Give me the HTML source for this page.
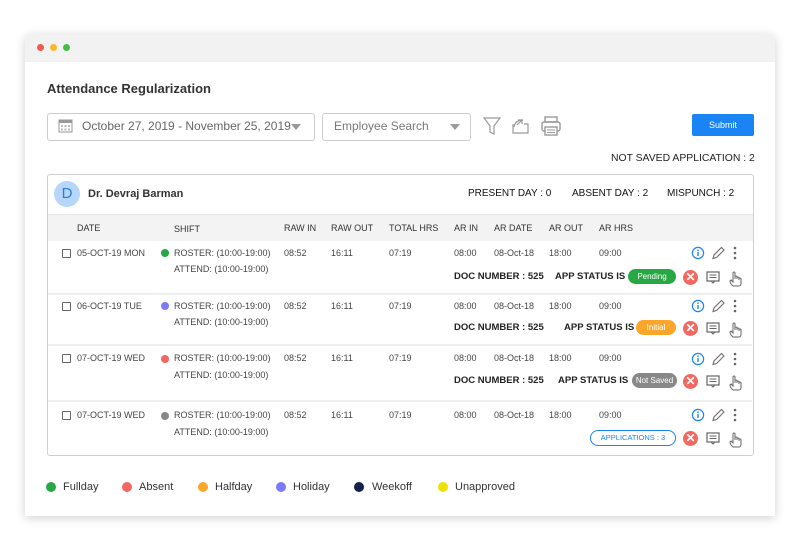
<!DOCTYPE html>
<html><head><meta charset="utf-8"><style>
*{margin:0;padding:0;box-sizing:border-box}
body{width:800px;height:550px;background:#fff;font-family:"Liberation Sans",sans-serif;position:relative;overflow:hidden;color:#333}
.a{position:absolute;white-space:nowrap;line-height:12px}
.win{position:absolute;left:25px;top:34px;width:750px;height:482px;background:#fff;border-radius:6px 6px 0 0;box-shadow:0 2px 10px rgba(0,0,0,.18)}
.bar{position:absolute;left:25px;top:34px;width:750px;height:28px;background:#f2f2f2;border-radius:6px 6px 0 0}
.d{position:absolute;border-radius:50%}
.t{font-size:9px;color:#444}
.h{font-size:9px;color:#333}
.b{font-size:10px;font-weight:bold;color:#222}
.cb{position:absolute;width:9px;height:9px;border:1px solid #666;border-radius:1px}
.pill{position:absolute;height:15px;border-radius:8px;color:#fff;font-size:8px;text-align:center;line-height:15px}
.x{position:absolute;width:15px;height:15px;border-radius:50%;background:#f26860;color:#fff;font-size:12px;line-height:15px;text-align:center;font-weight:bold}
.sep{position:absolute;left:48px;width:704px;height:2px;background:#eceef0}
</style></head><body>
<div class="win"></div><div class="bar"></div>
<div class="d" style="left:37px;top:44px;width:7px;height:7px;background:#f05a50"></div>
<div class="d" style="left:50px;top:44px;width:7px;height:7px;background:#f7b731"></div>
<div class="d" style="left:63px;top:44px;width:7px;height:7px;background:#3ec13e"></div>
<div class="a" style="left:47px;top:82px;font-size:13px;font-weight:bold;color:#333;line-height:14px">Attendance Regularization</div>

<div style="position:absolute;left:47px;top:113px;width:268px;height:28px;border:1px solid #ccc;border-radius:3px"></div>
<svg style="position:absolute;left:58px;top:118px" width="15" height="15" viewBox="0 0 15 15"><rect x="1" y="2" width="13" height="12" fill="none" stroke="#999" stroke-width="1"/><rect x="1" y="2" width="13" height="3" fill="#999"/><g fill="#bbb"><rect x="3" y="7" width="2" height="2"/><rect x="6.5" y="7" width="2" height="2"/><rect x="10" y="7" width="2" height="2"/><rect x="3" y="10.5" width="2" height="2"/><rect x="6.5" y="10.5" width="2" height="2"/><rect x="10" y="10.5" width="2" height="2"/></g></svg>
<div class="a" style="left:82px;top:120px;font-size:12px;color:#666;line-height:13px">October 27, 2019 - November 25, 2019</div>
<div style="position:absolute;left:291px;top:124px;border-left:5px solid transparent;border-right:5px solid transparent;border-top:6px solid #999"></div>
<div style="position:absolute;left:322px;top:113px;width:149px;height:28px;border:1px solid #ccc;border-radius:3px"></div>
<div class="a" style="left:334px;top:120px;font-size:12px;color:#777;line-height:13px">Employee Search</div>
<div style="position:absolute;left:450px;top:124px;border-left:5px solid transparent;border-right:5px solid transparent;border-top:6px solid #999"></div>
<svg style="position:absolute;left:483px;top:116px" width="18" height="20" viewBox="0 0 18 20"><path d="M1 2h16l-6 8v8l-4-2v-6z" fill="none" stroke="#999" stroke-width="1.2"/></svg>
<svg style="position:absolute;left:510px;top:115px" width="20" height="20" viewBox="0 0 20 20"><path d="M3 9v9h15V9h-4M7 10l5-5M12 5H8M12 5v4" fill="none" stroke="#999" stroke-width="1.2"/><path d="M4 12c1-5 4-7 9-7" fill="none" stroke="#999" stroke-width="1.2"/></svg>
<svg style="position:absolute;left:540px;top:115px" width="22" height="22" viewBox="0 0 22 22"><rect x="5" y="2" width="12" height="5" fill="none" stroke="#999" stroke-width="1.4"/><rect x="2" y="7" width="18" height="9" rx="2" fill="none" stroke="#999" stroke-width="1.4"/><rect x="5" y="12" width="12" height="8" fill="#fff" stroke="#999" stroke-width="1.4"/><path d="M7 15h8M7 17.5h8" stroke="#999"/></svg>
<div style="position:absolute;left:692px;top:114px;width:62px;height:22px;background:#1a84f5;border-radius:2px;color:#fff;font-size:9px;text-align:center;line-height:22px">Submit</div>
<div class="a" style="left:611px;top:153px;font-size:10.4px;color:#222">NOT SAVED APPLICATION : 2</div>

<div style="position:absolute;left:47px;top:174px;width:707px;height:282px;border:1px solid #cfcfcf;border-radius:3px"></div>
<div class="d" style="left:54px;top:181px;width:26px;height:26px;background:#b6d7fb;color:#2b7bdc;font-size:15px;text-align:center;line-height:26px">D</div>
<div class="a" style="left:88px;top:188px;font-size:11px;font-weight:bold;color:#333">Dr. Devraj Barman</div>
<div class="a b" style="left:468px;top:188px;font-weight:normal;color:#111">PRESENT DAY : 0</div>
<div class="a b" style="left:572px;top:188px;font-weight:normal;color:#111">ABSENT DAY : 2</div>
<div class="a b" style="left:667px;top:188px;font-weight:normal;color:#111">MISPUNCH : 2</div>
<div style="position:absolute;left:48px;top:214px;width:705px;height:27px;background:#f3f3f3;border-top:1px solid #e5e5e5"></div>
<div class="a h" style="left:77px;top:222px">DATE</div>
<div class="a h" style="left:174px;top:223px">SHIFT</div>
<div class="a h" style="left:284px;top:222px">RAW IN</div>
<div class="a h" style="left:331px;top:222px">RAW OUT</div>
<div class="a h" style="left:389px;top:222px">TOTAL HRS</div>
<div class="a h" style="left:454px;top:222px">AR IN</div>
<div class="a h" style="left:494px;top:222px">AR DATE</div>
<div class="a h" style="left:549px;top:222px">AR OUT</div>
<div class="a h" style="left:599px;top:222px">AR HRS</div>

<div class="sep" style="top:293px"></div>
<div class="sep" style="top:344px"></div>
<div class="sep" style="top:400px"></div>

<div class="cb" style="left:62px;top:249px"></div><div class="a t" style="left:77px;top:247px">05-OCT-19 MON</div>
<div class="d" style="left:161px;top:249px;width:8px;height:8px;background:#27a844"></div>
<div class="a t" style="left:174px;top:247px">ROSTER: (10:00-19:00)</div><div class="a t" style="left:174px;top:263px">ATTEND: (10:00-19:00)</div>
<div class="a t" style="left:284px;top:247px">08:52</div><div class="a t" style="left:331px;top:247px">16:11</div><div class="a t" style="left:389px;top:247px">07:19</div>
<div class="a t" style="left:454px;top:247px">08:00</div><div class="a t" style="left:494px;top:247px">08-Oct-18</div><div class="a t" style="left:549px;top:247px">18:00</div><div class="a t" style="left:599px;top:247px">09:00</div>
<div class="a b" style="left:454px;top:271px;font-size:9.5px">DOC NUMBER : 525</div><div class="a b" style="left:555px;top:271px;font-size:9.5px">APP STATUS IS</div>
<div class="pill" style="left:628px;top:269px;width:48px;background:#27a844">Pending</div>

<div class="cb" style="left:62px;top:302px"></div><div class="a t" style="left:77px;top:300px">06-OCT-19 TUE</div>
<div class="d" style="left:161px;top:302px;width:8px;height:8px;background:#7b7bf7"></div>
<div class="a t" style="left:174px;top:300px">ROSTER: (10:00-19:00)</div><div class="a t" style="left:174px;top:316px">ATTEND: (10:00-19:00)</div>
<div class="a t" style="left:284px;top:300px">08:52</div><div class="a t" style="left:331px;top:300px">16:11</div><div class="a t" style="left:389px;top:300px">07:19</div>
<div class="a t" style="left:454px;top:300px">08:00</div><div class="a t" style="left:494px;top:300px">08-Oct-18</div><div class="a t" style="left:549px;top:300px">18:00</div><div class="a t" style="left:599px;top:300px">09:00</div>
<div class="a b" style="left:454px;top:322px;font-size:9.5px">DOC NUMBER : 525</div><div class="a b" style="left:564px;top:322px;font-size:9.5px">APP STATUS IS</div>
<div class="pill" style="left:636px;top:320px;width:40px;background:#f9a62b">Initial</div>

<div class="cb" style="left:62px;top:354px"></div><div class="a t" style="left:77px;top:352px">07-OCT-19 WED</div>
<div class="d" style="left:161px;top:355px;width:8px;height:8px;background:#f26860"></div>
<div class="a t" style="left:174px;top:352px">ROSTER: (10:00-19:00)</div><div class="a t" style="left:174px;top:369px">ATTEND: (10:00-19:00)</div>
<div class="a t" style="left:284px;top:352px">08:52</div><div class="a t" style="left:331px;top:352px">16:11</div><div class="a t" style="left:389px;top:352px">07:19</div>
<div class="a t" style="left:454px;top:352px">08:00</div><div class="a t" style="left:494px;top:352px">08-Oct-18</div><div class="a t" style="left:549px;top:352px">18:00</div><div class="a t" style="left:599px;top:352px">09:00</div>
<div class="a b" style="left:454px;top:375px;font-size:9.5px">DOC NUMBER : 525</div><div class="a b" style="left:558px;top:375px;font-size:9.5px">APP STATUS IS</div>
<div class="pill" style="left:632px;top:373px;width:45px;background:#888">Not Saved</div>

<div class="cb" style="left:62px;top:411px"></div><div class="a t" style="left:77px;top:409px">07-OCT-19 WED</div>
<div class="d" style="left:161px;top:412px;width:8px;height:8px;background:#888"></div>
<div class="a t" style="left:174px;top:409px">ROSTER: (10:00-19:00)</div><div class="a t" style="left:174px;top:426px">ATTEND: (10:00-19:00)</div>
<div class="a t" style="left:284px;top:409px">08:52</div><div class="a t" style="left:331px;top:409px">16:11</div><div class="a t" style="left:389px;top:409px">07:19</div>
<div class="a t" style="left:454px;top:409px">08:00</div><div class="a t" style="left:494px;top:409px">08-Oct-18</div><div class="a t" style="left:549px;top:409px">18:00</div><div class="a t" style="left:599px;top:409px">09:00</div>
<div style="position:absolute;left:590px;top:430px;width:86px;height:16px;border:1px solid #1a84f5;border-radius:8px;color:#1a84f5;font-size:7.5px;text-align:center;line-height:14px">APPLICATIONS : 3</div>

<svg width="0" height="0" style="position:absolute"><defs>
<g id="ic1"><circle cx="7" cy="7" r="5.6" fill="none" stroke="#1a84f5" stroke-width="1.2"/><path d="M7 6v4" stroke="#1a84f5" stroke-width="1.4"/><circle cx="7" cy="4.2" r=".8" fill="#1a84f5"/>
<path d="M22 12.5l1-3.5 7.5-7.5 2.5 2.5-7.5 7.5z" fill="none" stroke="#777" stroke-width="1.2"/>
<circle cx="44" cy="2" r="1.3" fill="#666"/><circle cx="44" cy="7" r="1.3" fill="#666"/><circle cx="44" cy="12" r="1.3" fill="#666"/></g>
<g id="ic2"><rect x="1" y="2" width="12" height="9" fill="none" stroke="#666" stroke-width="1.2"/><path d="M5 11l2 2 2-2M3.5 5h7M3.5 7.5h7" stroke="#666" fill="none"/>
<path d="M27 16c-2-2-3-3-3-5l1-1 2 2V3a1 1 0 012 0v6V7a1 1 0 012 0v2-1a1 1 0 012 0v2-1a1 1 0 012 0v4c0 2-1 3-2 3z" fill="none" stroke="#666" stroke-width="1"/></g>
</defs></svg>
<svg style="position:absolute;left:691px;top:246px" width="50" height="16"><use href="#ic1"/></svg>
<svg style="position:absolute;left:691px;top:299px" width="50" height="16"><use href="#ic1"/></svg>
<svg style="position:absolute;left:691px;top:352px" width="50" height="16"><use href="#ic1"/></svg>
<svg style="position:absolute;left:691px;top:408px" width="50" height="16"><use href="#ic1"/></svg>
<div class="x" style="left:683px;top:270px">✕</div>
<div class="x" style="left:683px;top:321px">✕</div>
<div class="x" style="left:683px;top:374px">✕</div>
<div class="x" style="left:683px;top:431px">✕</div>
<svg style="position:absolute;left:706px;top:270px" width="44" height="20"><use href="#ic2"/></svg>
<svg style="position:absolute;left:706px;top:321px" width="44" height="20"><use href="#ic2"/></svg>
<svg style="position:absolute;left:706px;top:374px" width="44" height="20"><use href="#ic2"/></svg>
<svg style="position:absolute;left:706px;top:431px" width="44" height="20"><use href="#ic2"/></svg>

<div class="d" style="left:46px;top:482px;width:10px;height:10px;background:#27a844"></div><div class="a" style="left:63px;top:481px;font-size:11px;color:#333">Fullday</div>
<div class="d" style="left:122px;top:482px;width:10px;height:10px;background:#f26860"></div><div class="a" style="left:139px;top:481px;font-size:11px;color:#333">Absent</div>
<div class="d" style="left:198px;top:482px;width:10px;height:10px;background:#f9a62b"></div><div class="a" style="left:215px;top:481px;font-size:11px;color:#333">Halfday</div>
<div class="d" style="left:276px;top:482px;width:10px;height:10px;background:#7b7bf7"></div><div class="a" style="left:293px;top:481px;font-size:11px;color:#333">Holiday</div>
<div class="d" style="left:354px;top:482px;width:10px;height:10px;background:#15204d"></div><div class="a" style="left:372px;top:481px;font-size:11px;color:#333">Weekoff</div>
<div class="d" style="left:438px;top:482px;width:10px;height:10px;background:#f0e000"></div><div class="a" style="left:455px;top:481px;font-size:11px;color:#333">Unapproved</div>
</body></html>
